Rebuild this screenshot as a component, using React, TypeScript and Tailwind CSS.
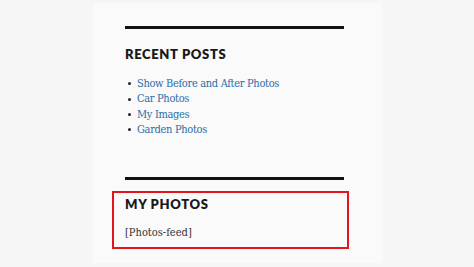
const posts = ["Show Before and After Photos", "Car Photos", "My Images", "Garden Photos"];

export default function App() {
  return (
    <div className="w-[474px] h-[267px] bg-[#f6f6f6] overflow-hidden">
      <div className="ml-[93px] mt-[3px] w-[289px] h-[260px] bg-[#fafafa] pl-[32px] pt-[23px]">
        <div className="w-[219px] h-[3px] bg-[#111]" />
        <h2 className="mt-[17px] text-[13px] leading-[16px] font-extrabold tracking-[0.05em] text-[#1a1a1a] font-['Lato',sans-serif]">
          RECENT POSTS
        </h2>
        <ul className="mt-[14px] font-['DejaVu_Serif_Condensed','DejaVu_Serif',serif] text-[11px] leading-[15.4px] tracking-[-0.03em]">
          {posts.map((p) => (
            <li key={p} className="flex items-center">
              <span className="w-[3px] h-[3px] rounded-full bg-[#222] ml-[3px] mr-[6px]" />
              <a href="#" className="text-[#2b6da6]">
                {p}
              </a>
            </li>
          ))}
        </ul>
        <div className="mt-[39px] w-[219px] h-[3px] bg-[#111]" />
        <div className="mt-[11px] -ml-[13px] w-[237px] h-[58px] border-2 border-[#e3141c] pl-[11px] pt-[3px]">
          <h2 className="text-[13px] leading-[16px] font-extrabold tracking-[0.05em] text-[#1a1a1a] font-['Lato',sans-serif]">
            MY PHOTOS
          </h2>
          <p className="mt-[13px] font-['DejaVu_Serif_Condensed','DejaVu_Serif',serif] text-[11px] leading-[15px] text-[#333]">
            [Photos-feed]
          </p>
        </div>
      </div>
    </div>
  );
}
